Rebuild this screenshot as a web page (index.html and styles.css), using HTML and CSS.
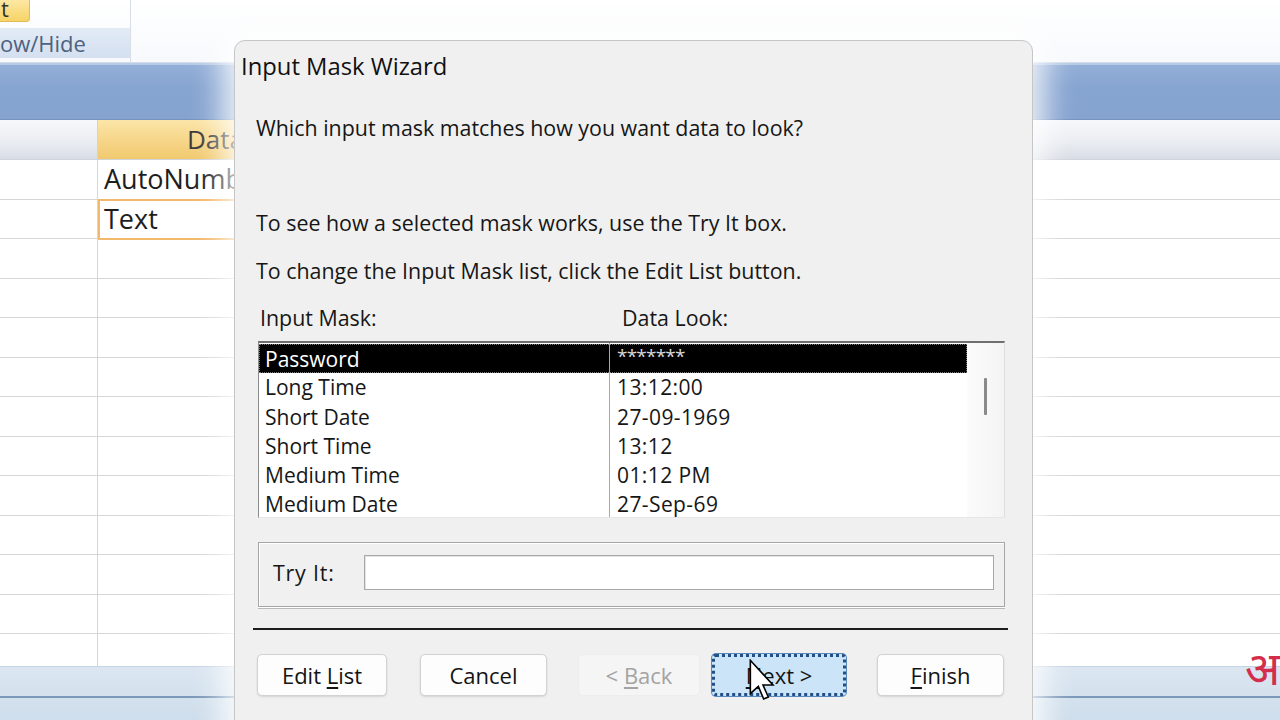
FILE: index.html
```html
<!DOCTYPE html>
<html>
<head>
<meta charset="utf-8">
<link rel="stylesheet" href="styles.css">
</head>
<body>
<div class="app">
  <div class="ribbon">
    <div class="group">
      <div class="btnfrag">t</div>
      <div class="grouplabel">ow/Hide</div>
    </div>
  </div>
  <div class="bluebar"></div>
  <div class="grid">
    <div class="row hdr"><div class="c1"></div><div class="c2">Data Type</div><div class="c3"></div></div>
    <div class="row"><div class="c1"></div><div class="c2">AutoNumber</div><div class="c3"></div></div>
    <div class="row"><div class="c1"></div><div class="c2 sel">Text</div><div class="c3"></div></div>
    <div class="row"><div class="c1"></div><div class="c2"></div><div class="c3"></div></div>
    <div class="row"><div class="c1"></div><div class="c2"></div><div class="c3"></div></div>
    <div class="row"><div class="c1"></div><div class="c2"></div><div class="c3"></div></div>
    <div class="row"><div class="c1"></div><div class="c2"></div><div class="c3"></div></div>
    <div class="row"><div class="c1"></div><div class="c2"></div><div class="c3"></div></div>
    <div class="row"><div class="c1"></div><div class="c2"></div><div class="c3"></div></div>
    <div class="row"><div class="c1"></div><div class="c2"></div><div class="c3"></div></div>
    <div class="row"><div class="c1"></div><div class="c2"></div><div class="c3"></div></div>
    <div class="row"><div class="c1"></div><div class="c2"></div><div class="c3"></div></div>
    <div class="row"><div class="c1"></div><div class="c2"></div><div class="c3"></div></div>
    <div class="row last"><div class="c1"></div><div class="c2"></div><div class="c3"></div></div>
  </div>
  <div class="status"></div>
</div>

<div class="watermark">अ</div>

<div class="dialog">
  <div class="title">Input Mask Wizard</div>
  <div class="text question">Which input mask matches how you want data to look?</div>
  <div class="text info1">To see how a selected mask works, use the Try It box.</div>
  <div class="text info2">To change the Input Mask list, click the Edit List button.</div>
  <div class="labels"><span class="lab1">Input Mask:</span><span class="lab2">Data Look:</span></div>
  <div class="listbox">
    <div class="items">
      <div class="item selected"><span class="k">Password</span><span class="v stars">*******</span></div>
      <div class="item"><span class="k">Long Time</span><span class="v">13:12:00</span></div>
      <div class="item"><span class="k">Short Date</span><span class="v">27-09-1969</span></div>
      <div class="item"><span class="k">Short Time</span><span class="v">13:12</span></div>
      <div class="item"><span class="k">Medium Time</span><span class="v">01:12 PM</span></div>
      <div class="item"><span class="k">Medium Date</span><span class="v">27-Sep-69</span></div>
      <div class="divider"></div>
    </div>
    <div class="scroll"><div class="thumb"></div></div>
  </div>
  <div class="tryit">
    <span class="trylabel">Try It:</span>
    <div class="tryinput"></div>
  </div>
  <div class="sep"></div>
  <div class="buttons">
    <div class="btn b-edit"><span>Edit <u>L</u>ist</span></div>
    <div class="btn b-cancel"><span>Cancel</span></div>
    <div class="btn b-back"><span>&lt; <u>B</u>ack</span></div>
    <div class="btn b-next"><span><u>N</u>ext &gt;</span></div>
    <div class="btn b-finish"><span><u>F</u>inish</span></div>
  </div>
</div>

<svg class="cursor" width="28" height="44" viewBox="0 0 21 33">
  <path d="M1 1 L1 26 L7 20.5 L11 30 L14.5 28.5 L10.5 19.5 L18 19.5 Z" fill="#fff" stroke="#000" stroke-width="1.2" stroke-linejoin="miter"/>
</svg>
</body>
</html>
```
FILE: styles.css
```css
html, body {
  margin: 0;
  padding: 0;
}
body {
  width: 1280px;
  height: 720px;
  overflow: hidden;
  position: relative;
  background: #ffffff;
  font-family: "Open Sans", "Noto Sans", sans-serif;
}

/* ---------- background application ---------- */
.app {
  display: flex;
  flex-direction: column;
  height: 720px;
}
.ribbon {
  height: 63px;
  background: linear-gradient(#ffffff, #f7f9fc);
  border-bottom: 1px solid #d3dce8;
  box-sizing: border-box;
  display: flex;
}
.group {
  width: 131px;
  border-right: 1px solid #d9dee6;
  box-sizing: border-box;
  display: flex;
  flex-direction: column;
}
.btnfrag {
  width: 30px;
  height: 22px;
  box-sizing: border-box;
  background: linear-gradient(#fde7a3, #f7d466);
  border: 1px solid #e3bb55;
  border-top: none;
  border-left: none;
  border-radius: 0 0 4px 0;
  font-size: 22px;
  line-height: 17px;
  color: #333;
  padding-left: 1px;
  overflow: hidden;
}
.grouplabel {
  margin-top: 6px;
  height: 30px;
  background: linear-gradient(#e3ebf6, #d4dff0);
  font-size: 22px;
  line-height: 30px;
  color: #4d6280;
  padding-left: 0;
}
.bluebar {
  height: 57px;
  background: linear-gradient(#93afd8, #87a5d1 40%, #86a3cf);
  border-top: 2px solid #b8cbe6;
  border-bottom: 1px solid #7592bf;
  box-sizing: border-box;
}
.grid {
  display: flex;
  flex-direction: column;
  flex: none;
}
.row {
  display: flex;
  height: 39.5px;
  box-sizing: border-box;
  border-bottom: 1px solid #d6d6d6;
}
.row.last {
  height: 32px;
  border-bottom: none;
}
.row .c1 {
  width: 97px;
  flex: none;
  border-right: 1px solid #d6d6d6;
}
.row .c2 {
  width: 140px;
  flex: none;
  font-size: 27px;
  line-height: 38px;
  padding-left: 6px;
  color: #1e1e1e;
  box-sizing: border-box;
  white-space: nowrap;
  overflow: hidden;
}
.row .c3 {
  flex: 1;
}
.row .c2.sel {
  border: 2px solid #f2b86b;
  margin-top: -1px;
  height: 41px;
  padding-left: 4px;
  line-height: 36px;
}
.row.hdr {
  height: 40px;
  border-bottom: 1px solid #cfd3da;
  background: linear-gradient(#f7f8fb, #e9ecf1 60%, #d8dde5);
}
.row.hdr .c1 {
  border-right: 1px solid #cfd3da;
}
.row.hdr .c2 {
  background: linear-gradient(#fbe5a8, #f6d588 55%, #f1c96e);
  padding-left: 89px;
  color: #3a3a3a;
  font-size: 26px;
}
.status {
  flex: 1;
  background: linear-gradient(#dbe6f1, #cfdeec 95%);
  border-top: 1px solid #c5d4e4;
  height: 48px;
  box-sizing: border-box;
}
.status::after {
  content: "";
  display: block;
  margin-top: 29px;
  height: 2px;
  background: #7c98b9;
}

.watermark {
  position: absolute;
  left: 1245px;
  top: 646px;
  font-family: "Noto Sans Devanagari", "Noto Sans", "DejaVu Sans", sans-serif;
  font-size: 46px;
  line-height: 56px;
  color: #d42e4c;
}

/* ---------- dialog ---------- */
.dialog {
  position: absolute;
  left: 234px;
  top: 40px;
  width: 799px;
  height: 700px;
  box-sizing: border-box;
  background: #f0f0f0;
  border: 1px solid #c6c6c6;
  border-radius: 11px 11px 0 0;
  box-shadow: 0 0 30px 12px rgba(255, 255, 255, 0.85);
  display: flex;
  flex-direction: column;
  color: #161616;
  font-size: 21.4px;
}
.title {
  height: 52px;
  padding-top: 11px;
  box-sizing: border-box;
  line-height: 28px;
  padding-left: 6px;
  font-size: 23.8px;
  color: #111;
}
.text {
  line-height: 28px;
  height: 28px;
  padding-left: 21px;
  white-space: nowrap;
}
.question { margin-top: 21px; }
.info1 { margin-top: 67px; }
.info2 { margin-top: 20px; }
.labels {
  margin-top: 19px;
  height: 28px;
  line-height: 28px;
  display: flex;
}
.lab1 { margin-left: 25px; width: 362px; }

.listbox {
  margin-top: 9px;
  margin-left: 23px;
  width: 747px;
  height: 177px;
  box-sizing: border-box;
  background: #fff;
  border-top: 2px solid #6f6f6f;
  border-left: 1px solid #8d8d8d;
  border-right: 1px solid #dedede;
  border-bottom: 1px solid #e6e6e6;
  display: flex;
}
.items {
  width: 708px;
  position: relative;
  padding-top: 1px;
  overflow: hidden;
  font-size: 21px;
}
.item {
  height: 29.3px;
  line-height: 29px;
  display: flex;
  position: relative;
  z-index: 1;
  box-sizing: border-box;
  white-space: nowrap;
}
.item .k {
  width: 351px;
  padding-left: 6px;
  box-sizing: border-box;
}
.item .v {
  padding-left: 7px;
  letter-spacing: 0.4px;
}
.item.selected {
  background: #000;
  color: #fff;
  border: 1px dotted #fff;
  outline: 1px dotted #777;
  outline-offset: -1px;
}
.item.selected .k { padding-left: 5px; }
.item.selected .v { padding-left: 6px; }
.item .v.stars {
  color: #d8d8d8;
  font-size: 19px;
  line-height: 22px;
  letter-spacing: -0.8px;
}
.divider {
  position: absolute;
  left: 350px;
  top: 0;
  bottom: 0;
  width: 1px;
  background: #a9a9a9;
  z-index: 2;
}
.scroll {
  flex: 1;
  background: linear-gradient(90deg, #fbfbfb, #f4f4f4);
  display: flex;
  justify-content: center;
  padding-top: 35px;
  box-sizing: border-box;
}
.thumb {
  width: 3px;
  height: 37px;
  background: #8a8a8a;
  border-radius: 1px;
}

.tryit {
  margin-top: 24px;
  margin-left: 23px;
  width: 747px;
  height: 65px;
  box-sizing: border-box;
  border: 1px solid #a6a6a6;
  box-shadow: inset 1px 1px 0 #ffffff, 0 1px 0 #ffffff, 0 2px 0 #b9b9b9;
  display: flex;
  align-items: center;
}
.trylabel {
  margin-left: 14px;
  width: 91px;
  margin-top: -5px;
  letter-spacing: 0.8px;
}
.tryinput {
  width: 630px;
  height: 35px;
  box-sizing: border-box;
  background: #fff;
  border: 1px solid #a8a8a8;
  box-shadow: inset 1px 1px 0 #e3e3e3;
  margin-top: -4px;
}

.sep {
  margin-top: 21px;
  margin-left: 18px;
  width: 755px;
  height: 2px;
  background: #1c1c1c;
}

.buttons {
  margin-top: 24px;
  margin-left: 22px;
  height: 42px;
  display: flex;
}
.btn {
  height: 42px;
  box-sizing: border-box;
  background: #fdfdfd;
  border: 1px solid #d2d2d2;
  border-radius: 5px;
  box-shadow: 0 1px 2px rgba(0, 0, 0, 0.12);
  display: flex;
  align-items: center;
  justify-content: center;
  font-size: 22px;
  color: #141414;
  white-space: nowrap;
}
.btn u {
  text-underline-offset: 3px;
}
.b-edit { width: 130px; }
.b-cancel { width: 127px; margin-left: 33px; }
.b-back {
  width: 122px;
  margin-left: 31px;
  background: #f5f5f5;
  border-color: #ededed;
  box-shadow: none;
  color: #a3a3a3;
}
.b-next {
  width: 134px;
  margin-left: 12px;
  background: #cce4f7;
  border: 3px dotted #224f86;
  border-radius: 4px;
  box-shadow: 0 0 0 1px #5a88bb;
}
.b-finish { width: 127px; margin-left: 31px; }

.cursor {
  position: absolute;
  left: 749px;
  top: 659px;
}
```
